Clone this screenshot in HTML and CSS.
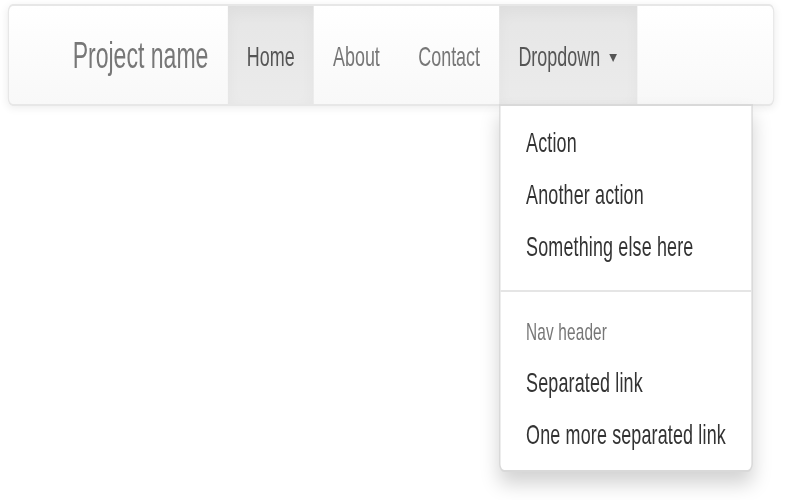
FILE: index.html
```html
<!DOCTYPE html>
<html>
<head>
<meta charset="utf-8">
<link rel="stylesheet" href="styles.css">
</head>
<body>
<div class="stage">
  <nav class="navbar">
    <a class="brand" href="#">Project name</a>
    <ul class="nav">
      <li class="active"><a href="#">Home</a></li>
      <li><a href="#">About</a></li>
      <li><a href="#">Contact</a></li>
      <li class="dropdown open">
        <a href="#">Dropdown <span class="caret"></span></a>
        <ul class="menu">
          <li><a href="#">Action</a></li>
          <li><a href="#">Another action</a></li>
          <li><a href="#">Something else here</a></li>
          <li class="divider"></li>
          <li class="header">Nav header</li>
          <li><a href="#">Separated link</a></li>
          <li><a href="#">One more separated link</a></li>
        </ul>
      </li>
    </ul>
  </nav>
</div>
</body>
</html>
```

FILE: styles.css
```css
html, body {
  margin: 0;
  padding: 0;
  background: #fff;
  overflow: hidden;
}
body {
  width: 800px;
  height: 500px;
  font-family: "Liberation Sans", Arial, sans-serif;
  font-size: 14px;
  line-height: 20px;
  color: #333;
}
.stage {
  width: 625px;
  box-sizing: border-box;
  padding: 2px 20.4px 0 6.25px;
  transform: scale(1.28, 2);
  transform-origin: 0 0;
}
.navbar {
  display: flex;
  align-items: stretch;
  height: 50.5px;
  box-sizing: border-box;
  border: 1px solid #e7e7e7;
  border-radius: 4px;
  background: linear-gradient(to bottom, #fff 0, #f8f8f8 100%);
  box-shadow: inset 0 1px 0 rgba(255,255,255,.15), 0 1px 5px rgba(0,0,0,.075);
}
a {
  text-decoration: none;
}
.brand {
  display: block;
  padding: 14.5px 15px 0 49.5px;
  font-size: 18px;
  line-height: 20px;
  color: #777;
}
.nav {
  display: flex;
  margin: 0;
  padding: 0;
  list-style: none;
}
.nav > li {
  position: relative;
}
.nav > li > a {
  display: block;
  height: 100%;
  box-sizing: border-box;
  padding: 14.5px 15px 0 15px;
  color: #777;
}
.nav > li.active > a,
.nav > li.open > a {
  color: #555;
  background: linear-gradient(to bottom, #e6e6e6 0, #ebebeb 100%);
  box-shadow: inset 0 3px 9px rgba(0,0,0,.04);
}
.nav > li.open > a {
  padding-right: 16px;
}
.caret {
  display: inline-block;
  width: 0;
  height: 0;
  margin-left: 3px;
  vertical-align: middle;
  border-top: 4px solid #555;
  border-right: 3.5px solid transparent;
  border-left: 3.5px solid transparent;
}
.menu {
  position: absolute;
  top: 100%;
  left: 0;
  min-width: 160px;
  margin: 0;
  padding: 5px 0;
  list-style: none;
  background: #fff;
  border: 1px solid rgba(0,0,0,.15);
  border-radius: 0 0 4px 4px;
  box-shadow: 0 6px 12px rgba(0,0,0,.175);
  white-space: nowrap;
  letter-spacing: 0.12px;
}
.menu li a {
  display: block;
  padding: 3px 20px;
  color: #333;
}
.menu .divider {
  height: 1px;
  margin: 9px 0;
  background: #e5e5e5;
}
.menu .header {
  padding: 3px 20px;
  font-size: 12px;
  line-height: 17.14px;
  color: #777;
}
```
